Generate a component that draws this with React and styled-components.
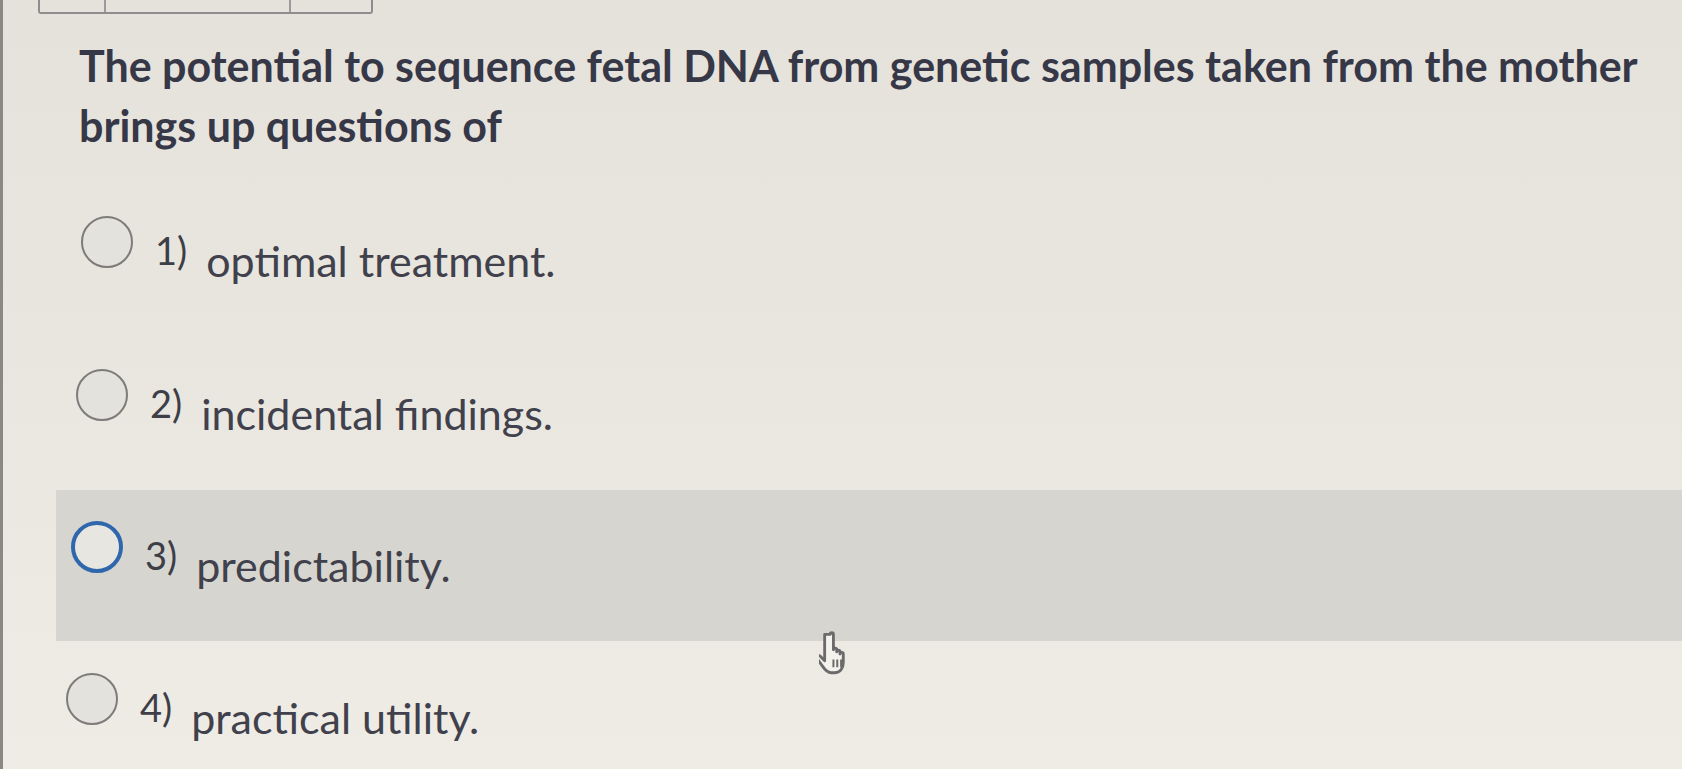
import styled, { createGlobalStyle } from "styled-components";

const GlobalStyle = createGlobalStyle`
  html, body {
    margin: 0;
    padding: 0;
  }
  body {
    width: 1682px;
    height: 769px;
    overflow: hidden;
    font-family: Lato, "Noto Sans", sans-serif;
    background: #e8e5de;
  }
`;

const Screen = styled.div`
  position: relative;
  width: 1682px;
  height: 769px;
  overflow: hidden;
  background: linear-gradient(180deg, #e5e2db 0%, #e9e6df 45%, #efece5 100%);
  border-left: 3px solid #8a8883;
  box-sizing: border-box;
`;

const TopTable = styled.div`
  display: grid;
  grid-template-columns: 66px 185px 84px;
  width: 335px;
  height: 14px;
  margin-left: 35px;
  border: 2px solid #8d8d8d;
  border-top: none;
  border-radius: 0 0 3px 3px;
  box-sizing: border-box;
`;

const Cell = styled.div`
  border-right: ${(p) => (p.last ? "none" : "2px solid #9a9a9a")};
`;

const Question = styled.h1`
  margin: 22px 0 0 76px;
  font-size: 43px;
  line-height: 60px;
  font-weight: 700;
  color: #363848;
`;

const Options = styled.div`
  display: flex;
  flex-direction: column;
  margin-top: 28px;
  margin-left: 53px;
`;

const Option = styled.div`
  display: flex;
  align-items: center;
  height: ${(p) => (p.selected ? "151px" : "153px")};
  padding-left: ${(p) => p.indent}px;
  background: ${(p) => (p.selected ? "#d7d5cf" : "transparent")};
`;

const Radio = styled.span`
  flex: none;
  width: 52px;
  height: 52px;
  border-radius: 50%;
  box-sizing: border-box;
  border: ${(p) => (p.selected ? "4px solid #2f67ad" : "2.5px solid #7d7c7a")};
  background: ${(p) => (p.selected ? "#e8e6e0" : "#e4e2dc")};
  margin-bottom: 38px;
`;

const Num = styled.span`
  margin-left: 22px;
  font-size: 38px;
  color: #3d3e48;
  margin-bottom: 22px;
`;

const Label = styled.span`
  margin-left: 19px;
  font-size: 43px;
  color: #40414c;
`;

const Cursor = styled.svg`
  position: absolute;
  left: 816px;
  top: 630px;
`;

const options = [
  { n: "1)", text: "optimal treatment.", indent: 25 },
  { n: "2)", text: "incidental findings.", indent: 20 },
  { n: "3)", text: "predictability.", indent: 15, selected: true },
  { n: "4)", text: "practical utility.", indent: 10 },
];

export default function App() {
  return (
    <>
      <GlobalStyle />
      <Screen>
        <TopTable>
          <Cell />
          <Cell />
          <Cell last />
        </TopTable>
        <Question>
          The potential to sequence fetal DNA from genetic samples taken from the mother
          <br />
          brings up questions of
        </Question>
        <Options>
          {options.map((o) => (
            <Option key={o.n} selected={o.selected} indent={o.indent}>
              <Radio selected={o.selected} />
              <Num>{o.n}</Num>
              <Label>{o.text}</Label>
            </Option>
          ))}
        </Options>
        <Cursor width="42" height="46" viewBox="0 0 38 42">
          <path
            d="M10 4c0-2 3-2 3 0v14c0-2 3-2 3 0v2c0-2 3-2 3 0v2c0-2 3-2 3 0v8c0 5-3 9-8 9h-3c-4 0-6-3-8-6l-5-7c-1-2 1-4 3-2l4 4V4z"
            fill="#f4f2ec"
            stroke="#6b6b6b"
            strokeWidth="2.6"
            strokeLinejoin="round"
          />
          <path d="M13 27v7M16.5 27v7M20 27v7" stroke="#6b6b6b" strokeWidth="1.8" />
        </Cursor>
      </Screen>
    </>
  );
}
